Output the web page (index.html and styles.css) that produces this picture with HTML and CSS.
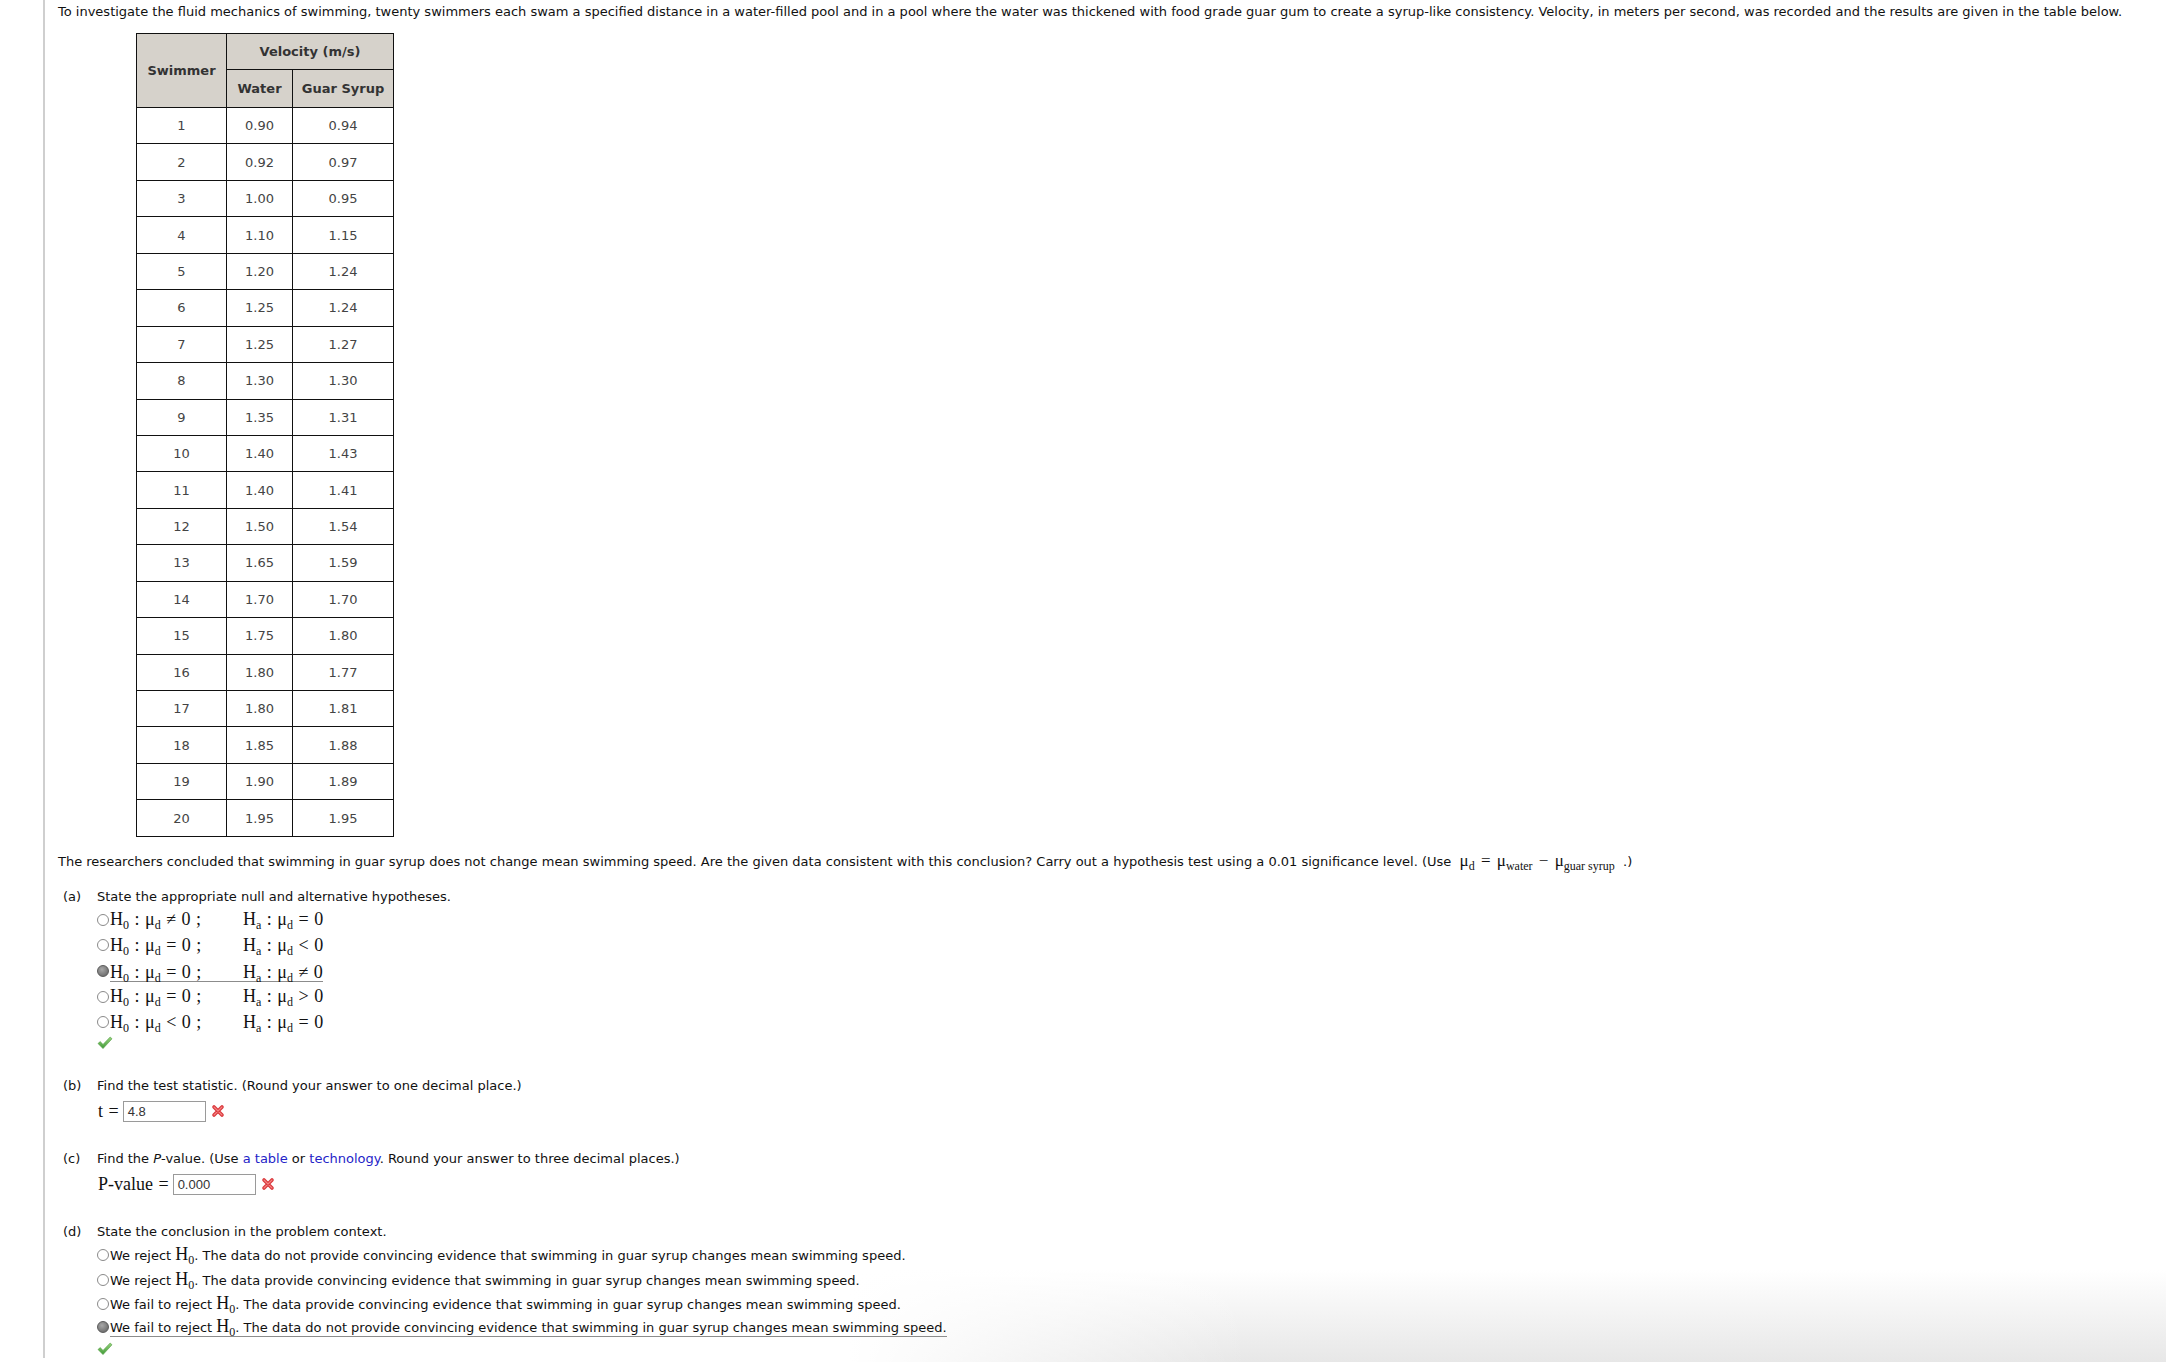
FILE: index.html
```html
<!DOCTYPE html>
<html lang="en">
  <head>
    <meta charset="UTF-8" />
    <title>Swimming in Guar Syrup</title>
    <link rel="stylesheet" href="styles.css">
  </head>
  <body>
    <div class="page">
      <p class="intro">
        To investigate the fluid mechanics of swimming, twenty swimmers each swam a specified distance in a water-filled pool and in a pool where the water was thickened with food grade guar gum to create a syrup-like consistency. Velocity, in meters per second, was recorded and the results are given in the table below.
      </p>

      <!-- Data table -->
      <table class="data">
        <thead>
          <tr class="head-top">
            <th rowspan="2" class="col-swimmer">Swimmer</th>
            <th colspan="2">Velocity (m/s)</th>
          </tr>
          <tr class="head-sub">
            <th class="col-water">Water</th>
            <th class="col-guar">Guar Syrup</th>
          </tr>
        </thead>
        <tbody>
          <tr><td>1</td><td>0.90</td><td>0.94</td></tr>
          <tr><td>2</td><td>0.92</td><td>0.97</td></tr>
          <tr><td>3</td><td>1.00</td><td>0.95</td></tr>
          <tr><td>4</td><td>1.10</td><td>1.15</td></tr>
          <tr><td>5</td><td>1.20</td><td>1.24</td></tr>
          <tr><td>6</td><td>1.25</td><td>1.24</td></tr>
          <tr><td>7</td><td>1.25</td><td>1.27</td></tr>
          <tr><td>8</td><td>1.30</td><td>1.30</td></tr>
          <tr><td>9</td><td>1.35</td><td>1.31</td></tr>
          <tr><td>10</td><td>1.40</td><td>1.43</td></tr>
          <tr><td>11</td><td>1.40</td><td>1.41</td></tr>
          <tr><td>12</td><td>1.50</td><td>1.54</td></tr>
          <tr><td>13</td><td>1.65</td><td>1.59</td></tr>
          <tr><td>14</td><td>1.70</td><td>1.70</td></tr>
          <tr><td>15</td><td>1.75</td><td>1.80</td></tr>
          <tr><td>16</td><td>1.80</td><td>1.77</td></tr>
          <tr><td>17</td><td>1.80</td><td>1.81</td></tr>
          <tr><td>18</td><td>1.85</td><td>1.88</td></tr>
          <tr><td>19</td><td>1.90</td><td>1.89</td></tr>
          <tr><td>20</td><td>1.95</td><td>1.95</td></tr>
        </tbody>
      </table>

      <p class="prompt">
        The researchers concluded that swimming in guar syrup does not change mean swimming speed. Are the given data consistent with this conclusion? Carry out a hypothesis test using a 0.01 significance level. (Use&nbsp;
        <span class="math">μ<sub>d</sub> = μ<sub>water</sub> − μ<sub>guar syrup</sub></span>&nbsp; .)
      </p>

      <!-- (a) hypotheses -->
      <div class="part part-a">
        <div class="part-head"><span class="part-label">(a)</span>State the appropriate null and alternative hypotheses.</div>
        <ul class="choices hyp">
          <li><span class="radio"></span><span class="math h0">H<sub>0</sub> : μ<sub>d</sub> ≠ 0 ;</span><span class="math">H<sub>a</sub> : μ<sub>d</sub> = 0</span></li>
          <li><span class="radio"></span><span class="math h0">H<sub>0</sub> : μ<sub>d</sub> = 0 ;</span><span class="math">H<sub>a</sub> : μ<sub>d</sub> &lt; 0</span></li>
          <li class="picked"><span class="radio on"></span><span class="pick-line"><span class="math h0">H<sub>0</sub> : μ<sub>d</sub> = 0 ;</span><span class="math">H<sub>a</sub> : μ<sub>d</sub> ≠ 0</span></span></li>
          <li><span class="radio"></span><span class="math h0">H<sub>0</sub> : μ<sub>d</sub> = 0 ;</span><span class="math">H<sub>a</sub> : μ<sub>d</sub> &gt; 0</span></li>
          <li><span class="radio"></span><span class="math h0">H<sub>0</sub> : μ<sub>d</sub> &lt; 0 ;</span><span class="math">H<sub>a</sub> : μ<sub>d</sub> = 0</span></li>
        </ul>
        <div class="mark">
          <svg width="16" height="14" viewBox="0 0 16 14"><defs><linearGradient id="g1" x1="0" y1="0" x2="0" y2="1"><stop offset="0" stop-color="#9ad47e"/><stop offset="1" stop-color="#3f9a37"/></linearGradient></defs><path d="M1 7.5 L3.2 5.6 L6 8.4 L13.2 1 L15 2.8 L6 12.6 Z" fill="url(#g1)" stroke="#4e9a3e" stroke-width="0.6" stroke-linejoin="round"/></svg>
        </div>
      </div>

      <!-- (b) test statistic -->
      <div class="part part-b">
        <div class="part-head"><span class="part-label">(b)</span>Find the test statistic. (Round your answer to one decimal place.)</div>
        <div class="answer">
          <span class="math ans-label">t =</span>
          <span class="box">4.8</span>
          <svg class="wrong" width="14" height="14" viewBox="0 0 14 14"><path d="M3 3 L11 11 M11 3 L3 11" stroke="#d9363a" stroke-width="3.6" stroke-linecap="round"/><path d="M3 3 L11 11 M11 3 L3 11" stroke="#f58383" stroke-width="1.1" stroke-linecap="round"/></svg>
        </div>
      </div>

      <!-- (c) p-value -->
      <div class="part part-c">
        <div class="part-head"><span class="part-label">(c)</span>Find the <i>P</i>-value. (Use <a href="#">a table</a> or <a href="#">technology</a>. Round your answer to three decimal places.)</div>
        <div class="answer">
          <span class="math ans-label">P-value =</span>
          <span class="box">0.000</span>
          <svg class="wrong" width="14" height="14" viewBox="0 0 14 14"><path d="M3 3 L11 11 M11 3 L3 11" stroke="#d9363a" stroke-width="3.6" stroke-linecap="round"/><path d="M3 3 L11 11 M11 3 L3 11" stroke="#f58383" stroke-width="1.1" stroke-linecap="round"/></svg>
        </div>
      </div>

      <!-- (d) conclusion -->
      <div class="part part-d">
        <div class="part-head"><span class="part-label">(d)</span>State the conclusion in the problem context.</div>
        <ul class="choices concl">
          <li><span class="radio"></span>We reject <span class="math">H<sub>0</sub></span>. The data do not provide convincing evidence that swimming in guar syrup changes mean swimming speed.</li>
          <li><span class="radio"></span>We reject <span class="math">H<sub>0</sub></span>. The data provide convincing evidence that swimming in guar syrup changes mean swimming speed.</li>
          <li><span class="radio"></span>We fail to reject <span class="math">H<sub>0</sub></span>. The data provide convincing evidence that swimming in guar syrup changes mean swimming speed.</li>
          <li class="picked"><span class="radio on"></span><span class="pick-line">We fail to reject <span class="math">H<sub>0</sub></span>. The data do not provide convincing evidence that swimming in guar syrup changes mean swimming speed.</span></li>
        </ul>
        <div class="mark">
          <svg width="16" height="14" viewBox="0 0 16 14"><defs><linearGradient id="g2" x1="0" y1="0" x2="0" y2="1"><stop offset="0" stop-color="#9ad47e"/><stop offset="1" stop-color="#3f9a37"/></linearGradient></defs><path d="M1 7.5 L3.2 5.6 L6 8.4 L13.2 1 L15 2.8 L6 12.6 Z" fill="url(#g2)" stroke="#4e9a3e" stroke-width="0.6" stroke-linejoin="round"/></svg>
        </div>
      </div>
    </div>
  </body>
</html>
```

FILE: styles.css
```css
html {
  height: 100%;
  background:
    linear-gradient(to right, #fff 850px, rgba(255, 255, 255, 0) 1250px),
    linear-gradient(to bottom, #fff 1270px, #e7e7e7 1362px);
  background-color: #fff;
}

body {
  margin: 0;
  font-family: "DejaVu Sans", Verdana, sans-serif;
  font-size: 13px;
  color: #111;
  overflow: hidden;
}

.page {
  margin-left: 43px;
  border-left: 2px solid #cfcfcf;
  padding: 4px 0 0 13px;
  min-height: 1358px;
  box-sizing: border-box;
}

p {
  margin: 0;
  line-height: 15px;
}

.math {
  font-family: "Liberation Serif", "Times New Roman", serif;
  font-size: 18px;
  color: #111;
  word-spacing: 1px;
}

.math sub {
  font-size: 12px;
  vertical-align: -4px;
  line-height: 0;
  word-spacing: 0;
}

/* table */

.data {
  margin: 14px 0 0 78px;
  border-collapse: collapse;
  border: 1px solid #111;
}

.data th,
.data td {
  border: 1px solid #111;
  text-align: center;
  padding: 0;
}

.data th {
  background-color: #d6d2cb;
  color: #333;
  font-weight: bold;
}

.col-swimmer {
  width: 89px;
}

.col-water {
  width: 65px;
}

.col-guar {
  width: 100px;
}

.head-top {
  height: 36px;
}

.head-sub {
  height: 38px;
}

.data td {
  color: #444;
  height: 35.45px;
}

/* question parts */

.prompt {
  margin-top: 16px;
}

.prompt .math {
  font-size: 17px;
  word-spacing: 2px;
}

.part {
  padding-left: 5px;
}

.part-head {
  line-height: 15px;
}

.part-label {
  display: inline-block;
  width: 34px;
}

.part-a {
  margin-top: 20px;
}

.part-b,
.part-c,
.part-d {
  margin-top: 28px;
}

.choices {
  list-style: none;
  margin: 3px 0 0 34px;
  padding: 0;
}

.hyp li {
  display: flex;
  align-items: center;
  height: 25.7px;
}

.concl {
  margin-top: 3px;
}

.concl li {
  height: 24.6px;
  line-height: 24.6px;
  white-space: nowrap;
}

.h0 {
  display: inline-block;
  width: 133px;
}

.radio {
  display: inline-block;
  width: 10px;
  height: 10px;
  border: 1px solid #8a8a8a;
  border-radius: 50%;
  background: #fff;
  margin-right: 1px;
  flex: none;
  vertical-align: -1px;
}

.radio.on {
  background: radial-gradient(circle at 40% 35%, #a8a8a8, #747474 70%);
  border-color: #5a5a5a;
}

.pick-line {
  display: flex;
  align-items: center;
  border-bottom: 1px solid #8c8c8c;
  line-height: 18px;
  margin-top: 4px;
}

.concl .pick-line {
  display: inline;
  margin: 0;
  line-height: normal;
  padding-bottom: 1px;
}

.mark {
  height: 14px;
  margin-left: 34px;
  padding-top: 1px;
}

.answer {
  display: flex;
  align-items: center;
  height: 24px;
  margin: 6px 0 0 35px;
}

.ans-label {
  margin-right: 4px;
}

.box {
  display: inline-block;
  width: 77px;
  height: 19px;
  line-height: 19px;
  border: 1px solid #9a9a9a;
  padding-left: 4px;
  font-family: "Liberation Sans", Arial, sans-serif;
  font-size: 13px;
  color: #333;
}

.wrong {
  margin-left: 5px;
}

a {
  color: #2424c8;
  text-decoration: none;
}
```
